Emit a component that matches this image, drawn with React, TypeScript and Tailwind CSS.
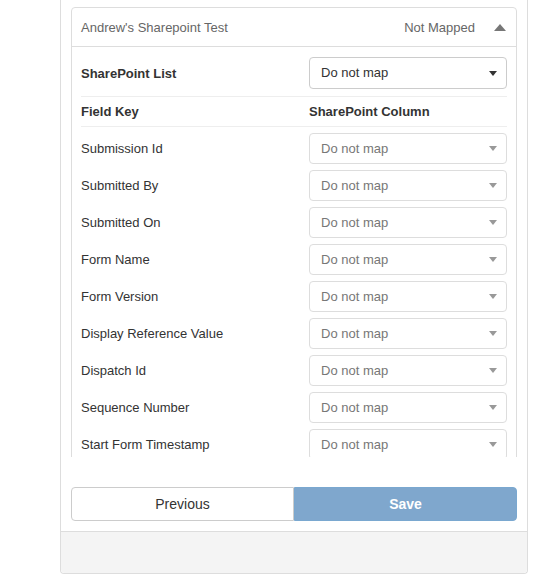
const FIELDS = [
  'Submission Id',
  'Submitted By',
  'Submitted On',
  'Form Name',
  'Form Version',
  'Display Reference Value',
  'Dispatch Id',
  'Sequence Number',
  'Start Form Timestamp',
];

function Caret({ className }: { className: string }) {
  return (
    <svg width="8" height="5" viewBox="0 0 8 5" className={className}>
      <path d="M0 0h8L4 5z" fill="currentColor" />
    </svg>
  );
}

function MapSelect({ strong = false }: { strong?: boolean }) {
  return (
    <div
      className={`flex items-center justify-between rounded-[4px] border bg-white pl-[11px] pr-[9px] ${
        strong ? 'h-[32px] border-[#ccc] text-[#333]' : 'h-[31px] border-[#ddd] text-[#777]'
      }`}
    >
      <span>Do not map</span>
      <Caret className={strong ? 'text-[#333]' : 'text-[#999]'} />
    </div>
  );
}

export default function App() {
  return (
    <div className="min-h-screen bg-white font-['Liberation_Sans',Arial,sans-serif] text-[13px] text-[#333]">
      <div className="ml-[60px] w-[468px] rounded-b-[4px] border-x border-b border-[#ddd]">
        <div className="px-[10px] pt-[7px]">
          {/* scroll area, clipped */}
          <div className="h-[450px] overflow-hidden">
            <div className="rounded-[4px] border border-[#ddd]">
              <div className="flex h-[39px] items-center border-b border-[#ddd] pt-[1px] pl-[9px] pr-[10px] text-[#666]">
                <span className="flex-1">Andrew&apos;s Sharepoint Test</span>
                <span>Not Mapped</span>
                <svg width="12" height="7" viewBox="0 0 12 7" className="ml-[19px] text-[#777]">
                  <path d="M0 7L6 0l6 7z" fill="currentColor" />
                </svg>
              </div>
              <div className="px-[9px] pt-[10px]">
                <div className="grid grid-cols-[1fr_198px] items-center border-b border-[#eee] pb-[7px]">
                  <span className="pt-[2px] font-bold">SharePoint List</span>
                  <MapSelect strong />
                </div>
                <div className="grid h-[30px] grid-cols-[1fr_198px] items-center border-b border-[#eee] font-bold">
                  <span>Field Key</span>
                  <span>SharePoint Column</span>
                </div>
                <div className="flex flex-col gap-[6px] pt-[6px] pb-[10px]">
                  {FIELDS.map((f) => (
                    <div key={f} className="grid grid-cols-[1fr_198px] items-center">
                      <span className="pt-[1px]">{f}</span>
                      <MapSelect />
                    </div>
                  ))}
                </div>
              </div>
            </div>
          </div>
          <div className="mt-[30px] mb-[10px] flex h-[34px] text-[14px]">
            <button className="flex-1 rounded-l-[4px] border border-[#ccc] bg-white text-[#333]">Previous</button>
            <button className="flex-1 rounded-r-[4px] border border-[#7aa8d0] bg-[#7fa7cd] font-bold text-white">
              Save
            </button>
          </div>
        </div>
        <div className="h-[42px] rounded-b-[4px] border-t border-[#ddd] bg-[#f4f4f4]" />
      </div>
    </div>
  );
}
